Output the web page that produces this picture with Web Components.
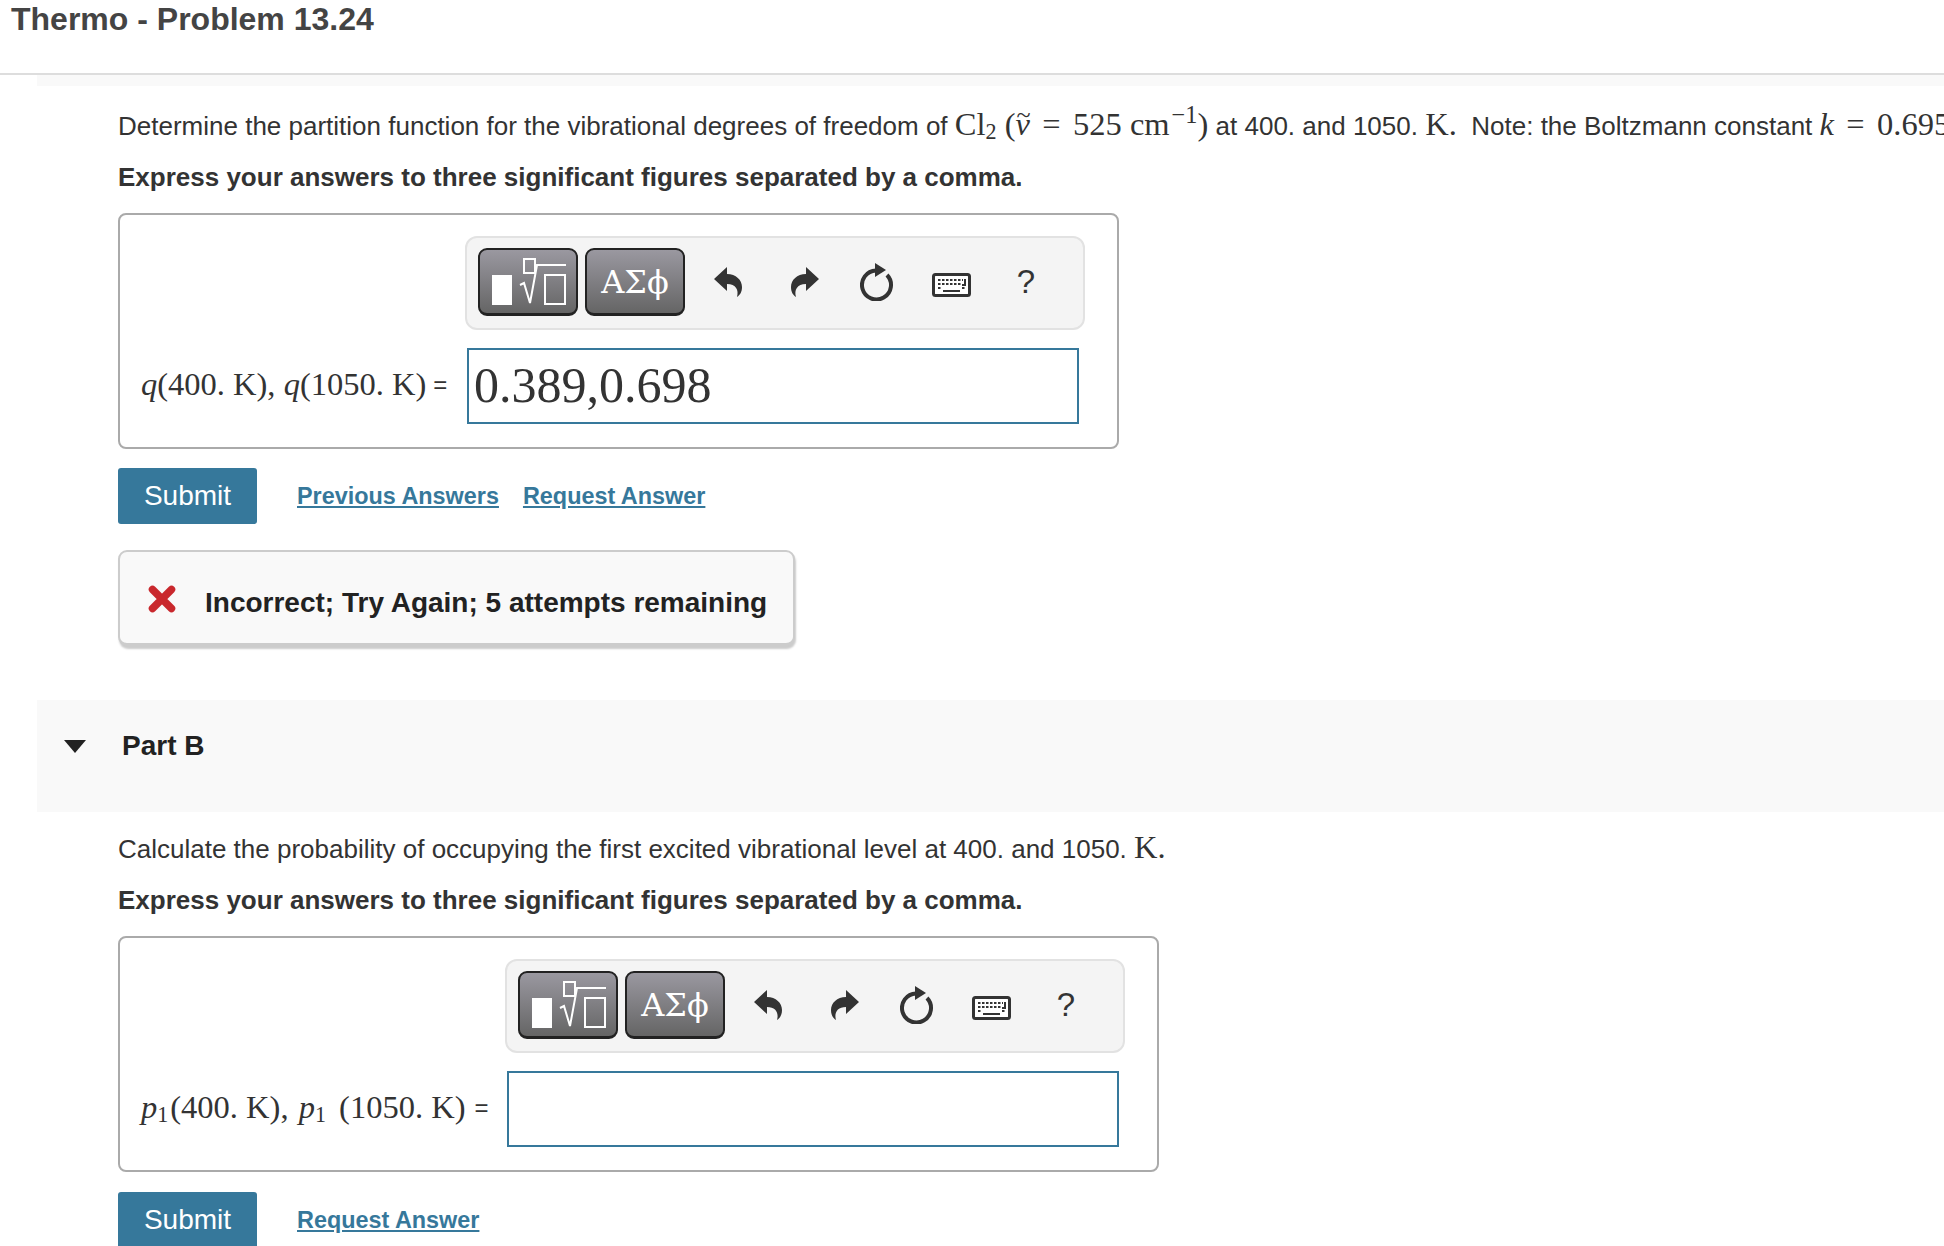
<!DOCTYPE html>
<html lang="en">
<head>
<meta charset="utf-8">
<title>Thermo - Problem 13.24</title>
<style>
  html, body { margin: 0; background: #fff; }
  body { font-family: "Liberation Sans", Arial, sans-serif; color: #333; overflow: hidden; height: 1246px; }
  i.v { font-family: "Liberation Serif", serif; font-style: italic; }
  span.m { font-family: "Liberation Serif", serif; font-size: 32.500px; }
  span.op { margin: 0 .38em; }
  sub.s, sup.s { font-family: "Liberation Serif", serif; font-size: 68%; line-height: 0; }
  sub.s { vertical-align: -0.2em; }
  sup.s { font-size: 75%; margin-left: 2px; }
  /* nu with a tilde laid over it, the combining mark renders badly in Liberation Serif */
  .nu { position: relative; display: inline-block; }
  .nu::after { content: "~"; position: absolute; left: 1px; top: -9px; font-style: normal; font-size: 26px; }
</style>
</head>
<body>

<template id="toolbar-tpl">
  <style>
    :host { display: flex; align-items: center; box-sizing: border-box; height: 94px; padding: 0 0 2px 11px; background: #f4f4f4; border: 2px solid #e2e2e2; border-radius: 12px; }
    .tpl { display: flex; align-items: center; justify-content: center; box-sizing: border-box; width: 100px; height: 68px; margin-right: 7px; border: 2px solid #222; border-bottom-width: 3px; border-radius: 9px; background: linear-gradient(#9a98a0, #656565); }
    .tpl svg { display: block; }
    .sym { color: #fff; font: 32px "DejaVu Serif", "Liberation Serif", serif; }
    .ic { display: flex; align-items: center; justify-content: center; flex: none; width: 74px; height: 68px; color: #333; }
    .q { font: 33px "Liberation Sans", sans-serif; color: #333; }
  </style>
  <div class="tpl">
    <svg width="80" height="50" viewBox="0 0 80 50" fill="none" stroke="#fff" stroke-width="2">
      <rect x="4" y="18" width="20" height="30" fill="#fff" stroke="none"/>
      <rect x="36" y="2" width="11" height="14"/>
      <path d="M32 28 l4 -2 l6 20 l7 -38 h29"/>
      <rect x="57" y="18" width="20" height="29"/>
    </svg>
  </div>
  <div class="tpl"><span class="sym">ΑΣϕ</span></div>
  <div class="ic" style="margin-left:-1px">
    <svg width="28" height="30" viewBox="0 0 28 30"><path fill="#333" d="M0 12 13 0V7C22 7 28 13 28 20 28 25 26 28 23 30 25 23 22 17 13 17V24Z"/></svg>
  </div>
  <div class="ic" style="margin-left:3px">
    <svg width="28" height="30" viewBox="0 0 28 30"><path fill="#333" d="M28 12 15 0V7C6 7 0 13 0 20 0 25 2 28 5 30 3 23 6 17 15 17V24Z"/></svg>
  </div>
  <div class="ic" style="margin-left:-2px">
    <svg width="34" height="38" viewBox="0 0 34 38"><path fill="none" stroke="#333" stroke-width="4" d="M27 12A14.5 14.5 0 1 1 16 7.500"/><path fill="#333" d="M15 0 26 7 15 14Z"/></svg>
  </div>
  <div class="ic" style="padding-top:6px;box-sizing:border-box">
    <svg width="39" height="24" viewBox="0 0 39 24">
      <rect x="1.500" y="1.500" width="36" height="21" rx="2" fill="#fff" stroke="#333" stroke-width="3"/>
      <path stroke="#333" stroke-width="2" stroke-dasharray="2.500 1.500" fill="none" d="M6 7H31M6 11H29M6 15H9M30 15h3"/>
      <path stroke="#333" stroke-width="2" fill="none" d="M33 6V12H30M11 18H28"/>
    </svg>
  </div>
  <div class="ic" style="margin-left:1px"><span class="q">?</span></div>
</template>

<template id="answer-tpl">
  <style>
    :host { display: inline-grid; grid-template-columns: var(--label-w, 347px) 620px; box-sizing: border-box; padding: 21px 30px 23px 0; border: 2px solid #aaa; border-radius: 8px; background: #fff; row-gap: 18px; vertical-align: top; }
    .gap { grid-column: 1; }
    math-toolbar { grid-column: 2; margin-left: -2px; margin-right: 2px; }
    .label { grid-column: 1; display: flex; align-items: center; padding: 0 0 3px 21px; font: 32.500px "Liberation Serif", serif; color: #333; white-space: nowrap; }
    .label ::slotted(*) { white-space: nowrap; }
    .eq { font: 24px "Liberation Sans", sans-serif; margin-left: 7px; }
    .input { grid-column: 2; box-sizing: border-box; width: 612px; height: 76px; border: 2px solid #36789b; background: #fff; padding: 0 5px 2px; display: flex; align-items: center; font: 50px "Liberation Serif", serif; color: #333; }
  </style>
  <div class="gap"></div>
  <math-toolbar></math-toolbar>
  <div class="label"><slot name="label"></slot><span class="eq">=</span></div>
  <div class="input"><slot></slot></div>
</template>

<template id="actions-tpl">
  <style>
    :host { display: flex; align-items: center; height: 56px; }
    .submit { display: flex; align-items: center; justify-content: center; width: 139px; height: 56px; border-radius: 3px; background: #36789b; color: #fff; font: 28px "Liberation Sans", sans-serif; box-sizing: border-box; }
    .links { display: flex; gap: 24px; margin-left: 40px; }
    .links ::slotted(a) { color: #36789b; font: bold 23.400px "Liberation Sans", sans-serif; text-decoration: underline; }
  </style>
  <div class="submit">Submit</div>
  <div class="links"><slot></slot></div>
</template>

<template id="feedback-tpl">
  <style>
    :host { display: inline-flex; align-items: center; box-sizing: border-box; width: 677px; height: 96px; padding-left: 28px; background: #f9f9f9; border: 2px solid #ccc; border-bottom-width: 3px; border-radius: 9px; box-shadow: 1px 3px 2px #ccc; }
    svg { display: block; margin: 2px 29px 0 0; flex: none; }
    span { font: bold 28px "Liberation Sans", sans-serif; color: #222; white-space: nowrap; padding-top: 10px; }
  </style>
  <svg width="28" height="28" viewBox="0 0 28 28"><path fill="none" stroke="#c9282d" stroke-width="7.500" stroke-linecap="round" d="M4.500 4.500 23.500 23.500M23.500 4.500 4.500 23.500"/></svg>
  <span><slot></slot></span>
</template>

<template id="part-tpl">
  <style>
    :host { display: flex; align-items: center; height: 112px; background: #f9f9f9; padding-bottom: 20px; box-sizing: border-box; }
    svg { margin-left: 27px; margin-right: 36px; display: block; }
    span { font: bold 28px "Liberation Sans", sans-serif; color: #222; }
  </style>
  <svg width="22" height="13" viewBox="0 0 22 13"><path fill="#222" d="M0 0H22L11 13Z"/></svg>
  <span><slot></slot></span>
</template>

<template id="question-tpl">
  <style>
    :host { display: block; padding-left: 81px; white-space: nowrap; }
    p { margin: 0; line-height: 30px; font-size: 26px; color: #333; }
    .b { margin-top: 21px; font-weight: bold; }
    .ans { display: block; margin-top: 21px; }
  </style>
  <p><slot name="text"></slot></p>
  <p class="b">Express your answers to three significant figures separated by a comma.</p>
  <div class="ans"><slot></slot></div>
</template>

<thermo-header>Thermo - Problem 13.24</thermo-header>

<thermo-main>
  <thermo-question style="margin-top:23px">
    <span slot="text">Determine the partition function for the vibrational degrees of freedom of <span class="m">Cl<sub class="s">2</sub> (<i class="v nu">ν</i><span class="op">=</span>525 cm<sup class="s">−1</sup>)</span> at 400. and 1050. <span class="m">K.</span>&nbsp; Note: the Boltzmann constant <span class="m"><i class="v">k</i><span class="op">=</span>0.695</span></span>
    <answer-box>
      <span slot="label"><i class="v">q</i>(400. K), <i class="v">q</i>(1050. K)</span>
      0.389,0.698
    </answer-box>
    <answer-actions style="margin-top:19px">
      <a>Previous Answers</a>
      <a>Request Answer</a>
    </answer-actions>
    <answer-feedback style="margin-top:26px">Incorrect; Try Again; 5 attempts remaining</answer-feedback>
  </thermo-question>

  <part-header style="margin-top:54px">Part B</part-header>

  <thermo-question style="margin-top:20px">
    <span slot="text">Calculate the probability of occupying the first excited vibrational level at 400. and 1050. <span class="m">K.</span></span>
    <answer-box style="--label-w:387px">
      <span slot="label" style="padding-right:2px"><i class="v">p</i><sub class="s" style="margin-right:2px">1</sub>(400. K), <i class="v" style="margin-left:2px">p</i><sub class="s" style="margin-right:5px">1</sub> (1050. K)</span>
    </answer-box>
    <answer-actions style="margin-top:20px">
      <a>Request Answer</a>
    </answer-actions>
  </thermo-question>
</thermo-main>

<script>
  // Small helper so every element stamps its own template
  function stamp(el, id) {
    const root = el.attachShadow({ mode: 'open' });
    root.appendChild(document.getElementById(id).content.cloneNode(true));
    return root;
  }

  class ThermoHeader extends HTMLElement {
    constructor() {
      super();
      this.attachShadow({ mode: 'open' }).innerHTML = `
        <style>
          :host { display: block; box-sizing: border-box; height: 75px; border-bottom: 2px solid #ddd; padding: 0 0 0 11px; font: bold 32px/38px "Liberation Sans", sans-serif; color: #444; white-space: nowrap; }
        </style>
        <slot></slot>`;
    }
  }

  class ThermoMain extends HTMLElement {
    constructor() {
      super();
      this.attachShadow({ mode: 'open' }).innerHTML = `
        <style>
          :host { display: block; margin-left: 37px; overflow: hidden; }
          .strip { height: 11px; background: #f9f9f9; }
        </style>
        <div class="strip"></div>
        <slot></slot>`;
    }
  }

  class MathToolbar extends HTMLElement { constructor() { super(); stamp(this, 'toolbar-tpl'); } }
  class AnswerBox extends HTMLElement { constructor() { super(); stamp(this, 'answer-tpl'); } }
  class AnswerActions extends HTMLElement { constructor() { super(); stamp(this, 'actions-tpl'); } }
  class AnswerFeedback extends HTMLElement { constructor() { super(); stamp(this, 'feedback-tpl'); } }
  class PartHeader extends HTMLElement { constructor() { super(); stamp(this, 'part-tpl'); } }
  class ThermoQuestion extends HTMLElement { constructor() { super(); stamp(this, 'question-tpl'); } }

  customElements.define('thermo-header', ThermoHeader);
  customElements.define('thermo-main', ThermoMain);
  customElements.define('math-toolbar', MathToolbar);
  customElements.define('answer-box', AnswerBox);
  customElements.define('answer-actions', AnswerActions);
  customElements.define('answer-feedback', AnswerFeedback);
  customElements.define('part-header', PartHeader);
  customElements.define('thermo-question', ThermoQuestion);
</script>
</body>
</html>
